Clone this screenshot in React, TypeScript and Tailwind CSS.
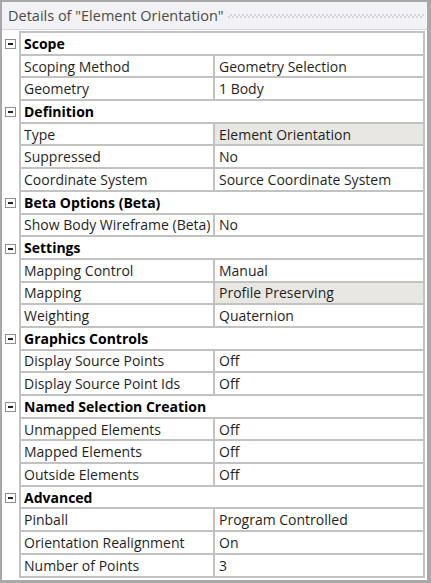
import React from "react";

type Row =
  | { kind: "h"; label: string }
  | { kind: "d"; name: string; value: string; hl?: boolean };

const rows: Row[] = [
  { kind: "h", label: "Scope" },
  { kind: "d", name: "Scoping Method", value: "Geometry Selection" },
  { kind: "d", name: "Geometry", value: "1 Body" },
  { kind: "h", label: "Definition" },
  { kind: "d", name: "Type", value: "Element Orientation", hl: true },
  { kind: "d", name: "Suppressed", value: "No" },
  { kind: "d", name: "Coordinate System", value: "Source Coordinate System" },
  { kind: "h", label: "Beta Options (Beta)" },
  { kind: "d", name: "Show Body Wireframe (Beta)", value: "No" },
  { kind: "h", label: "Settings" },
  { kind: "d", name: "Mapping Control", value: "Manual" },
  { kind: "d", name: "Mapping", value: "Profile Preserving", hl: true },
  { kind: "d", name: "Weighting", value: "Quaternion" },
  { kind: "h", label: "Graphics Controls" },
  { kind: "d", name: "Display Source Points", value: "Off" },
  { kind: "d", name: "Display Source Point Ids", value: "Off" },
  { kind: "h", label: "Named Selection Creation" },
  { kind: "d", name: "Unmapped Elements", value: "Off" },
  { kind: "d", name: "Mapped Elements", value: "Off" },
  { kind: "d", name: "Outside Elements", value: "Off" },
  { kind: "h", label: "Advanced" },
  { kind: "d", name: "Pinball", value: "Program Controlled" },
  { kind: "d", name: "Orientation Realignment", value: "On" },
  { kind: "d", name: "Number of Points", value: "3" },
];

function MinusBox() {
  return (
    <div className="w-[11px] h-[10px] border border-[#8e8e8e] bg-white flex items-center justify-center">
      <div className="w-[5px] h-[2px] bg-[#222]" />
    </div>
  );
}

export default function App() {
  return (
    <div
      className="w-[431px] h-[583px] bg-white border-t-2 border-l-2 border-r-4 border-b-[3px] border-[#a8a8a8] flex flex-col text-[14px] text-[#1f1f1f]"
      style={{ fontFamily: '"Open Sans", "Noto Sans", sans-serif' }}
    >
      <div className="h-[28px] shrink-0 bg-[#f2f2f6] border-b border-[#d6d6de] flex items-center pl-[6px] pr-[3px]">
        <span className="text-[14.5px] text-[#4a4a4a] whitespace-nowrap">
          Details of "Element Orientation"
        </span>
        <div className="flex-1 ml-[4px] h-[4px] bg-[repeating-conic-gradient(#d6d6d6_0_25%,transparent_0_50%)] bg-[length:4px_4px]" />
      </div>
      <div className="h-[1px] shrink-0" />
      <div className="flex">
        <div className="w-[17px] shrink-0 flex flex-col pt-[2px]">
          {rows.map((r, i) => (
            <div key={i} className="h-[22.7px] flex items-center pl-[3px]">
              {r.kind === "h" ? <MinusBox /> : null}
            </div>
          ))}
        </div>
        <div className="w-[406px] shrink-0 border-t-2 border-l-2 border-r-2 border-[#c2c2c2] flex flex-col">
          {rows.map((r, i) =>
            r.kind === "h" ? (
              <div
                key={i}
                className="h-[22.7px] border-b-2 border-[#c2c2c2] flex items-center pl-[3px] font-bold text-black whitespace-nowrap"
              >
                {r.label}
              </div>
            ) : (
              <div key={i} className="h-[22.7px] border-b-2 border-[#c2c2c2] flex">
                <div className="w-[192px] shrink-0 flex items-center pl-[3px] whitespace-nowrap">
                  {r.name}
                </div>
                <div
                  className={`flex-1 border-l-2 border-[#c2c2c2] flex items-center pl-[4px] whitespace-nowrap ${
                    r.hl ? "bg-[#e9e7e3]" : ""
                  }`}
                >
                  {r.value}
                </div>
              </div>
            )
          )}
        </div>
      </div>
    </div>
  );
}
